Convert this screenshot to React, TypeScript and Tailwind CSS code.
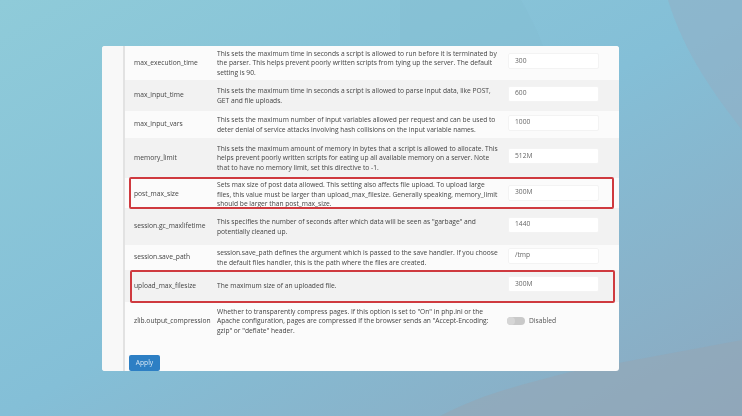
const rows = [
  { name: "max_execution_time", h: "h-[34px]", lines: ["This sets the maximum time in seconds a script is allowed to run before it is terminated by", "the parser. This helps prevent poorly written scripts from tying up the server. The default", "setting is 90."], value: "300" },
  { name: "max_input_time", h: "h-[31px]", lines: ["This sets the maximum time in seconds a script is allowed to parse input data, like POST,", "GET and file uploads."], value: "600" },
  { name: "max_input_vars", h: "h-[27px]", lines: ["This sets the maximum number of input variables allowed per request and can be used to", "deter denial of service attacks involving hash collisions on the input variable names."], value: "1000" },
  { name: "memory_limit", h: "h-[40px]", lines: ["This sets the maximum amount of memory in bytes that a script is allowed to allocate. This", "helps prevent poorly written scripts for eating up all available memory on a server. Note", "that to have no memory limit, set this directive to -1."], value: "512M" },
  { name: "post_max_size", h: "h-[30px] pt-[3px]", lines: ["Sets max size of post data allowed. This setting also affects file upload. To upload large", "files, this value must be larger than upload_max_filesize. Generally speaking, memory_limit", "should be larger than post_max_size."], value: "300M" },
  { name: "session.gc_maxlifetime", h: "h-[37px]", lines: ["This specifies the number of seconds after which data will be seen as \"garbage\" and", "potentially cleaned up."], value: "1440" },
  { name: "session.save_path", h: "h-[25px]", lines: ["session.save_path defines the argument which is passed to the save handler. If you choose", "the default files handler, this is the path where the files are created."], value: "/tmp" },
  { name: "upload_max_filesize", h: "h-[32px]", lines: ["The maximum size of an uploaded file."], value: "300M" },
  { name: "zlib.output_compression", h: "h-[38px]", lines: ["Whether to transparently compress pages. If this option is set to \"On\" in php.ini or the", "Apache configuration, pages are compressed if the browser sends an \"Accept-Encoding:", "gzip\" or \"deflate\" header."], value: "" },
];

export default function App() {
  return (
    <div className="relative w-[742px] h-[416px] overflow-hidden bg-gradient-to-br from-[#8fcbd9] via-[#84bfd7] to-[#8ba8bf] font-['Open_Sans',sans-serif]">
      {/* background waves */}
      <svg className="absolute inset-0" width="742" height="416" viewBox="0 0 742 416">
        <path d="M668 0 L742 0 L742 130 C715 95 685 55 668 0 Z" fill="#93adc4" opacity="0.5" />
        <path d="M521 0 C535 25 545 45 552 80 L400 80 L400 0 Z" fill="#7fb7c9" opacity="0.15" />
        <path d="M440 416 C480 395 520 385 570 372 L742 340 L742 416 Z" fill="#95a6b6" opacity="0.6" />
      </svg>

      <div className="relative pt-[46px] pl-[102px]">
        <div className="w-[517px] h-[325px] bg-[#fbfbfb] rounded-[3px] flex overflow-hidden blur-[0.4px]">
          <div className="w-[23px] shrink-0 bg-[#f8f8f8] border-r-2 border-[#e2e2e2]" />
          <div className="flex-1 flex flex-col">
            {rows.map((row, i) => (
              <div key={row.name} className={`${row.h} shrink-0 flex items-center pl-[9px] overflow-hidden ${i % 2 === 1 ? "bg-[#f2f2f2]" : "bg-[#fbfbfb]"}`}>
                <div className="w-[83px] shrink-0 text-[6.7px] text-[#444444] whitespace-nowrap">{row.name}</div>
                <div className="w-[291px] shrink-0 text-[6.67px] leading-[9.6px] text-[#444444]">
                  {row.lines.map((line) => (
                    <div key={line} className="whitespace-nowrap">{line}</div>
                  ))}
                </div>
                {row.value ? (
                  <div className="w-[91px] h-[16px] mb-[4px] flex items-center pl-[6px] bg-white rounded-[2px] border border-[#f3f3f3] text-[6.7px] text-[#666666]">{row.value}</div>
                ) : (
                  <div className="flex items-center gap-[4px] ml-[-1px]">
                    <div className="w-[18px] h-[8px] rounded-full bg-[#c9c9c9] flex items-center">
                      <div className="w-[8px] h-[8px] rounded-full bg-[#d6d6d6]" />
                    </div>
                    <span className="text-[6.7px] text-[#555555]">Disabled</span>
                  </div>
                )}
              </div>
            ))}
            <div className="pl-[4px] pt-[7px]">
              <button className="w-[31px] h-[16px] bg-[#2d7fc4] rounded-[2px] text-[6.7px] text-[#d8e8f5]">Apply</button>
            </div>
          </div>
        </div>
      </div>

      {/* red highlight boxes */}
      <div className="absolute left-[129px] top-[177px] w-[485px] h-[32px] border-2 border-[#cf3a3f] rounded-[2px]" />
      <div className="absolute left-[130px] top-[270px] w-[485px] h-[33px] border-2 border-[#cf3a3f] rounded-[2px]" />
    </div>
  );
}
